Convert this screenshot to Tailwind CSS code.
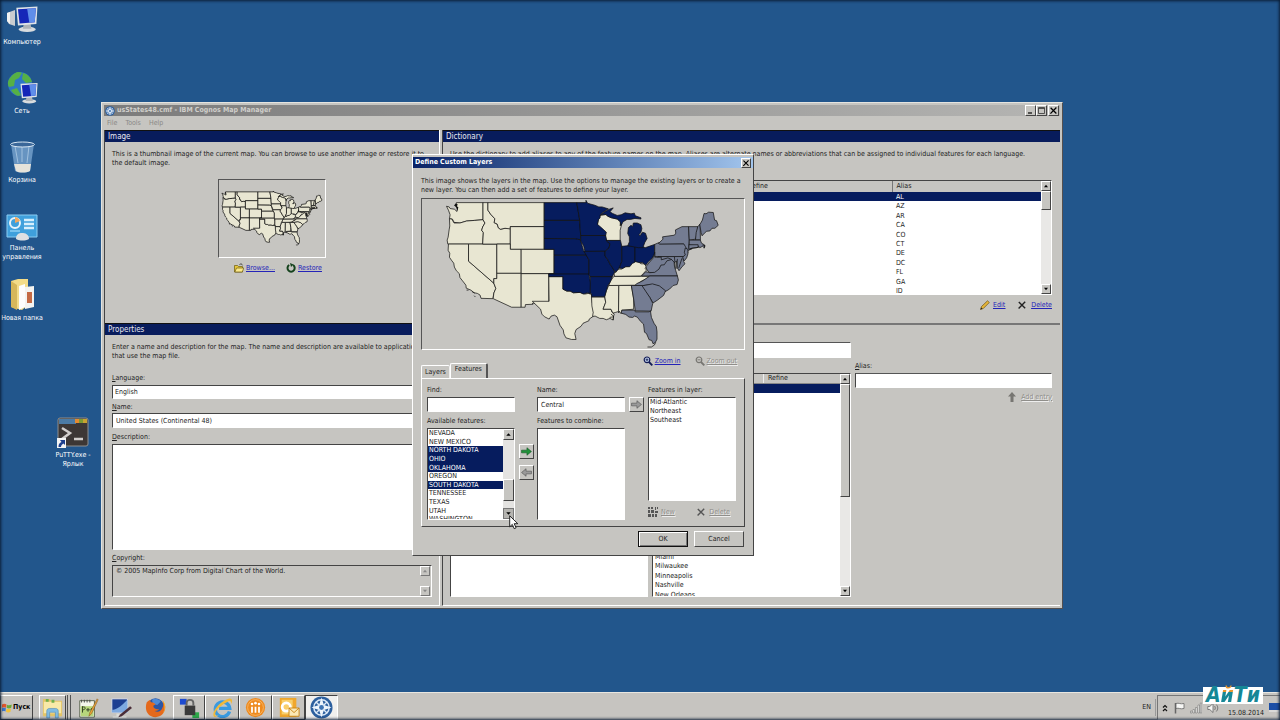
<!DOCTYPE html>
<html lang="ru">
<head>
    <meta charset="UTF-8">
    <meta name="viewport" content="width=device-width, initial-scale=1.0">
    <title>IBM Cognos Map Manager</title>
    <script src="https://cdn.jsdelivr.net/npm/@tailwindcss/browser@4"></script>
</head>
<body class="relative flex min-h-screen flex-col overflow-hidden bg-[#22568c] font-['DejaVu_Sans_Condensed','Noto_Sans',sans-serif] text-[7px] leading-[9px] text-[#222]">

    <!-- shared symbols -->
    <svg class="absolute size-0" aria-hidden="true">
        <symbol id="up" viewBox="0 0 10 10"><path d="M5 3.500 7.500 6.500h-5z"/></symbol>
        <symbol id="down" viewBox="0 0 10 10"><path d="M5 6.500 7.500 3.500h-5z"/></symbol>
        <symbol id="cross" viewBox="0 0 10 10"><path d="M1.800 2 8.200 8.300M8.200 1.700 1.600 8.500" fill="none" stroke="currentColor" stroke-width="1.400"/></symbol>
        <symbol id="arrow" viewBox="0 0 12 10"><path d="M.5 3.500h6V.8L11.500 5 6.500 9.200V6.500h-6z" stroke="currentColor" stroke-width=".6"/></symbol>
        <symbol id="globe" viewBox="0 0 24 24">
            <circle cx="12" cy="12" r="11.500" fill="#2c5f9e"/>
            <circle cx="12" cy="12" r="8" fill="none" stroke="#dce9f7" stroke-width="1.500"/>
            <path d="M12 1.500 14.500 9.500 22.500 12 14.500 14.500 12 22.500 9.500 14.500 1.500 12 9.500 9.500z" fill="#eef5fc"/>
            <path d="M6 6 10 10M18 6 14 10M6 18 10 14M18 18 14 14" stroke="#dce9f7" stroke-width="1.500"/>
            <circle cx="12" cy="12" r="2.500" fill="#3d73b3"/>
        </symbol>
        <symbol id="monitor" viewBox="0 0 24 24">
            <ellipse cx="14" cy="21.500" rx="8" ry="2.500" fill="#d9dcde"/>
            <path d="M11 16h6l1 5h-8z" fill="#aeb4b8"/>
            <path d="M4 1.500 23.500.5 22.500 16.500 5.500 18z" fill="#dfe4e8"/>
            <path d="M5.500 3 22 2 21 15 7 16.200z" fill="#1526b8"/>
            <path d="M14 2.500 22 2 21 15 16 15.500z" fill="#5f8eea"/>
        </symbol>
        <symbol id="usmap" viewBox="33 146 972 456">
            <g stroke="#111" stroke-linejoin="round">
                <g class="fill-[#e8e6d2]">
                    <path d="M104 168l8 2 3 5 13 2 8 7 2-12-5-3 1-12h81v52l-25 2-25 2-20 6-18-2-5-10-9-1 2-12-5-14z"/>
                    <path d="M113 206l7 1 7 12 18 0 20-6 25-2 25-2 6 10-7 12-3 10 5 7-2 35H108l-2-12 3-9 3-22 2-12z"/>
                    <path d="M110 283h61v52l77 67 6 16-6 14-3 17-36-1-3-10-8-5-10-2-10-8-14-6-1-9-10-13-8-10-2-12-9-9-6-11-2-12-7-9-6-9 1-12-5-9z"/>
                    <path d="M171 283h86v105h-9v14l-77-67z"/>
                    <path d="M215 157h15v23l8 12 13 14-2 12 9 4 4 12 6 4 14-3 16 1v47h-84l2-35-5-7 3-10 7-12-6-10z"/>
                    <path d="M230 157h171v73H298v7l-16-2-14 3-6-4-4-12-9-4 2-12-13-14-8-12z"/>
                    <path d="M298 230h103v69H298z"/>
                    <path d="M257 283h41v16h33v73h-74z"/>
                    <path d="M331 299h100v74H331z"/>
                    <path d="M257 372h74v103h-29l-56-26 2-17 6-14-6-16v-14h9z"/>
                    <path d="M331 373h84v89l-50 1 2 3-23 1-1 8h-12z"/>
                    <path d="M415 382h43v38l12 6 10 0 10 5 20-1 15 5 10-2 10 3 2 24 5 20-1 22-13 9-1 5-18 8-6 9-15 10-4 12 4 18-14 0-17-5-6-12-2-12-10-14-9-26-8-5-10 3-6 9-14-7-8-8-4-15-25-24h51z"/>
                    <path d="M545 444h40l3 16-8 21h24l3 9 7 6-2 6-1 12-10-5-11 4-10-4-10 0-14-7-8 1 2-12-4-20z"/>
                    <path d="M597 409h31l-1 79-10 3-7 2-6-12h-24l8-21-3-18 5-17z"/>
                    <path d="M628 409h38l7 41v31l-36 3 2 8-7 1-2-6-3 5z"/>
                    <path d="M613 381h109l-6 6-18 8-18 13-83 1 6-14z"/>
                    <path d="M615 381l-2-10 7-3 3-9 14 0 10-7 13-2 5-9 10-5 10-1 10 8 10 0 7 9-4 5 4 5-9 10-8 8z"/>
                    <path d="M563 222l3-15 6-12 18-2 4 5 12 5 18 4 9 8-1 12 5-6-5 20 0 31h-42l-4-17-9-12-14-10z"/>
                </g>
                <g class="fill-(--central)">
                    <path d="M401 157h99l5 28 4 26H401z"/>
                    <path d="M401 211h108l3 46-1 13-16-3-94-1z"/>
                    <path d="M401 266l94 1 16 3 10 33 9 14h-99v-18h-30z"/>
                    <path d="M431 317h99l7 14v44H415v-2h16z"/>
                    <path d="M415 374h122l5 27-1 33-8-3-13 4-10-5-20 1-10-5-10 0-12-6v-38h-43z"/>
                    <path d="M500 157h28v-7l5 9 22 6 12 5 10 0 19 6-17 11-8 8 0 8-5 6-3 14 14 12 13 12-2 10h-76l-2-22-1-24z"/>
                    <path d="M512 257h76l3 17 10 8-3 13-12 10-61 1-4-17-9-16z"/>
                    <path d="M522 305h64l0 14 8 11 8 15 8 10 5 13-7 14h-67l-4-7v-44z"/>
                    <path d="M541 382h67l-5 14-8 13-5 16-5 18h-40v-9l-4-2z"/>
                    <path d="M590 272h43l4 18v46l-5 14-7 12-8 6-15-23-8-15-8-11 0-14 12-10 3-13-10-8z"/>
                    <path d="M637 290l18-2h22v50l-8 4-8 10-12 0-10 5-10-1 8-20z"/>
                    <path d="M677 288l22 2 9 4 12-4 17-6v30l-9 14-10 9-8 10-10-8-12 0-11-3z"/>
                    <path d="M572 195l13-10 14-8 12-4-10 12 8 5 14 6 12-2 12-6 18 3 10-2 3 8 17 6 0 4-18-2-14 3-10 0-12 7-7 12-2-12-9-8-18-4-12-5-4-5z"/>
                    <path d="M655 288l5-12 0-15-5-10 2-18 8-7 5 4 2-11 12 0 11 5 3 12-3 12-6 7 3 3 8-11 9 3 5 16-7 12-6 16-14 0z"/>
                </g>
                <g class="fill-(--east)">
                    <path d="M737 284l14-6v4h79l8 8-2 10 2 8-8 13h-93z"/>
                    <path d="M749 281l13-13-1-7 36-5 4-6-1-10 20-10h20l2 40-1 18 0 9 10 0-14 6-7-13-5-8-74 1z"/>
                    <path d="M840 230h29l-7 38-20 3z"/>
                    <path d="M875 222l1 48h-15l2-22 5-18z"/>
                    <path d="M874 224l8-14 5-20 6 1 8-5 14 1 4 23 6 2 5 14-10 9-9 0-6 8-10 1-7 6-7 8-3-10z"/>
                    <path d="M842 271h34l3 9 10 6-1 8-6-4-8 4-6-6-26-2z"/>
                    <path d="M841 285h28v8l-18 2-10 4z"/>
                    <path d="M830 295l8 4 0 14-4 12-7 9-7-10 10-8-3-8z"/>
                    <path d="M747 321h75l3 15 4 7-9 9-9 12-6-10-2-20-8 8-8-9-18 4-18-5h-8z"/>
                    <path d="M737 308v15h20v8l20-6 12 5-12 9-10 10-10-1-8 17-12 7-15-2-8-8-4-10 9-11 12-14z"/>
                    <path d="M697 380l13-13 12 3 15-1 13-10 6-12 10-1 8-12 14-4 8 8 1 12 4 14 5 16z"/>
                    <path d="M700 395l22-15h84l3 12-4 14-12 3-11 11-12 7-19-15-21-6-20 2-12 2-23 0 8-7z"/>
                    <path d="M697 410l13-2 20-4 21 6 19 15-6 14-18 14-14 9-12-20-10-12z"/>
                    <path d="M666 409h32l12 18 12 18 9 18-5 24-48-1-5-36z"/>
                    <path d="M637 484h39l2 5 42 0 4-3 3 20 8 18 7 10 2 16 0 22-5 10-7 4-4-10-8-2-8-19-6-4-3-25-9-8-10-13-8-3-6 4-11-1-10-8-14-4z"/>
                </g>
            </g>
            <path d="M132 160l6 2-2 6 4 4-3 10-4-12-6-4z" fill="#111"/>
            <path d="M165 423h6M182 428l8 4M188 440l4 4M715 596l12 0 9-6 4-8M604 496l8 6-2 12M600 506l12-2M845 297l20-3 8-2M882 286l8 2-3 8" fill="none" stroke="#111"/>
            <path d="M797 322l3 36M806 328l-2 30M820 326l-10 30" fill="none" stroke="#111"/>
        </symbol>
    </svg>

    <!-- desktop -->
    <main class="relative flex-1 text-white">
        <a href="#" class="absolute top-1 left-0 flex w-11 flex-col items-center gap-[1px] text-center">
            <svg class="h-[33px] w-[34px]" viewBox="0 0 34 33">
                <path d="M2 9 10 6v16l-6-2-2-3z" fill="#c9cdd0"/><path d="M2 9 5 8v12l-3-3z" fill="#f2f2f2"/>
                <use href="#monitor" x="7" y="1" width="26" height="28"/>
            </svg>
            Компьютер
        </a>
        <a href="#" class="absolute top-[70px] left-0 flex w-11 flex-col items-center gap-[2px] text-center">
            <svg class="h-[35px] w-[34px]" viewBox="0 0 34 35">
                <circle cx="15" cy="14" r="12" fill="#2f77c4"/>
                <path d="M5 8c4-6 9-7 12-5l-3 5-4 2-1 6-5 1c-2-3-1-7 1-9zM18 3c5 1 8 5 9 9l-6 1-4-4zM6 20l6-2 4 7-3 1c-3-1-6-4-7-6z" fill="#56b045"/>
                <use href="#monitor" x="12" y="11" width="21" height="24"/>
            </svg>
            Сеть
        </a>
        <a href="#" class="absolute top-[140px] left-0 flex w-11 flex-col items-center gap-[2px] text-center">
            <svg class="h-[34px] w-[30px]" viewBox="0 0 30 34">
                <path d="M4 4h23l-4 27c-4 2-11 2-15 0z" fill="#7fa9d3" opacity=".75"/>
                <path d="M7 24h17l-1 7c-4 2-11 2-14 0z" fill="#e6e3da"/>
                <path d="M8 6 11 23M22 6 20 23M15 6v16" stroke="#b9d3ea" stroke-width="1" opacity=".7"/>
                <ellipse cx="15.500" cy="4.500" rx="12" ry="2.500" fill="#3a6799" stroke="#d8e6f2"/>
            </svg>
            Корзина
        </a>
        <a href="#" class="absolute top-[212px] left-0 flex w-11 flex-col items-center gap-[3px] text-center">
            <svg class="h-[29px] w-[34px]" viewBox="0 0 34 29">
                <path d="M2 3h30v22H2z" fill="#3fa0dc" stroke="#8ccdf2"/>
                <circle cx="10" cy="11" r="5" fill="none" stroke="#e8f4fb" stroke-width="2"/>
                <path d="M10 11V5a6 6 0 0 1 5 4z" fill="#f0a860"/>
                <path d="M19 8h10M19 12h10M19 16h10" stroke="#d7effc" stroke-width="2.500"/>
                <path d="M5 19h10" stroke="#8fd0f5" stroke-width="1.500"/>
                <path d="M11 27c0-5 3-6 6-6s7 1 7 6c-4 2-9 2-13 0z" fill="#dde0e2"/>
            </svg>
            <span>Панель<br>управления</span>
        </a>
        <a href="#" class="absolute top-[278px] left-0 flex w-11 flex-col items-center gap-[3px] text-center">
            <svg class="h-[33px] w-[30px]" viewBox="0 0 30 33">
                <path d="M4 3 11 1h10v26l-6 5-11-3z" fill="#f3dc88"/>
                <path d="M4 3 10 7v25l-6-3z" fill="#d6b75a"/>
                <path d="M12 8l6-2v23l-6 3z" fill="#fdfdfd"/>
                <path d="M18 9l9-1v21l-9 2z" fill="#f3f3f1"/>
                <path d="M20 14h5v11h-5z" fill="#c46a45"/>
            </svg>
            <span class="whitespace-nowrap">Новая папка</span>
        </a>
        <a href="#" class="absolute top-[416px] left-[51px] flex w-11 flex-col items-center gap-[2px] text-center">
            <svg class="h-[33px] w-[34px]" viewBox="0 0 34 33">
                <rect x="2" y="2" width="30" height="28" rx="2" fill="#3d3735" stroke="#8f8f8f"/>
                <path d="M3 3h17v5H3z" fill="#4c7ba5"/><path d="M19 3h4v4h-4z" fill="#e58b31"/><path d="M23 3h4v4h-4z" fill="#7d9b32"/><path d="M27 3h4v4h-4z" fill="#c9a331"/>
                <path d="M6 12l8 5-8 6M18 23h9" fill="none" stroke="#d2cecc" stroke-width="2.500"/>
                <path d="M1 22h9v10H1z" fill="#f4f4f4"/>
                <path d="M2.500 31c0-3 1-4 3-5L4 24h5v5l-1.500-1.500C6 28.500 5 29.500 5 31z" fill="#1d3f8e"/>
            </svg>
            <span>PuTTY.exe -<br>Ярлык</span>
        </a>

        <!-- Map Manager window -->
        <section class="absolute top-[102px] left-[101px] flex h-[507px] w-[962px] flex-col border border-t-[#e4e4e0] border-r-[#55504f] border-b-[#55504f] border-l-[#e4e4e0] bg-[#c6c5c1] p-[2px] text-[#222]">
            <header class="flex h-3 items-center gap-[2px] bg-linear-to-r from-[#7b7b7b] to-[#b5b5b3] px-px">
                <svg class="size-[10px]"><use href="#globe"/></svg>
                <h1 class="flex-1 font-bold text-[#d0cfcb]">usStates48.cmf - IBM Cognos Map Manager</h1>
                <div class="flex">
                    <button aria-label="Minimize" class="size-[11px] border border-t-white border-r-[#444] border-b-[#444] border-l-white bg-[#c6c5c1]"><svg class="size-[9px]" viewBox="0 0 9 9"><path d="M2 7h4" stroke="#111" stroke-width="1.300"/></svg></button>
                    <button aria-label="Maximize" class="size-[11px] border border-t-white border-r-[#444] border-b-[#444] border-l-white bg-[#c6c5c1]"><svg class="size-[9px]" viewBox="0 0 9 9"><path d="M1.500 1.500h6v6h-6zM1.500 2.500h6" fill="none" stroke="#333" stroke-width=".8"/></svg></button>
                    <button aria-label="Close" class="ml-px size-[11px] border border-t-white border-r-[#444] border-b-[#444] border-l-white bg-[#c6c5c1] text-black"><svg class="size-[9px]"><use href="#cross"/></svg></button>
                </div>
            </header>
            <nav class="flex h-4 items-center gap-2 px-[3px] text-[#8a8986]">
                <a href="#">File</a><a href="#">Tools</a><a href="#">Help</a>
            </nav>

            <div class="grid flex-1 grid-cols-[336px_1fr] grid-rows-[193px_1fr] gap-x-[2px]">
                <!-- Image -->
                <section class="border-r border-l border-r-white border-l-[#444]">
                    <h2 class="h-3 border-t border-[#111] bg-[#081c5c] px-[3px] text-[8px] leading-[11px] text-[#e8e8f0]">Image</h2>
                    <p class="mx-[7px] mt-2 whitespace-nowrap">This is a thumbnail image of the current map. You can browse to use another image or restore it to<br>the default image.</p>
                    <div class="mx-auto mt-[11px] h-[79px] w-[108px] border border-t-[#555] border-r-white border-b-white border-l-[#555]">
                        <svg class="h-full w-full [--central:#e8e6d2] [--east:#e8e6d2] stroke-[6px]" viewBox="80 61 875 632" role="img" aria-label="Map thumbnail">
                            <use href="#usmap" x="33" y="146" width="972" height="456"/>
                        </svg>
                    </div>
                    <div class="mt-1 ml-[129px] flex h-3 items-center text-[#2424b8] underline">
                        <svg class="mr-[2px] size-[10px]" viewBox="0 0 10 10"><path d="M.5 2.500h3l1 1h4V9h-8z" fill="#e9c93c" stroke="#6b5a10" stroke-width=".7"/><path d="M2.500 5h7.300L8.300 9H.8z" fill="#fbe98a" stroke="#6b5a10" stroke-width=".7"/><path d="M5.500 1.500c1.500-1 2.500-.5 3 .8" fill="none" stroke="#222" stroke-width=".8"/></svg>
                        <a href="#" class="w-10">Browse...</a>
                        <svg class="mr-[2px] size-[10px]" viewBox="0 0 10 10"><path d="M3.200 2A3.600 3.600 0 1 0 7 2" fill="none" stroke="#14421c" stroke-width="2"/><path d="M4 0 7.500 1.500 5 4z" fill="#14421c"/></svg>
                        <a href="#">Restore</a>
                    </div>
                </section>

                <!-- Dictionary -->
                <section class="border-l border-[#444]">
                    <h2 class="h-3 border-t border-[#111] bg-[#081c5c] px-[3px] text-[8px] leading-[11px] text-[#e8e8f0]">Dictionary</h2>
                    <p class="mx-[7px] mt-2 whitespace-nowrap">Use the dictionary to add aliases to any of the feature names on the map. Aliases are alternate names or abbreviations that can be assigned to individual features for each language.</p>
                    <div class="mt-[21px] mr-2 ml-[7px] flex h-[115px] border border-t-[#444] border-r-white border-b-white border-l-[#444] bg-white">
                        <div class="flex-1 overflow-hidden">
                            <table class="h-[115px] w-full table-fixed border-collapse">
                                <colgroup><col class="w-[295px]"><col class="w-[146px]"><col></colgroup>
                                <thead class="bg-[#c6c5c1] text-left">
                                    <tr class="h-[11px]"><th class="p-0"></th><th class="p-0 pl-[2px] font-normal">Refine</th><th class="border-l border-[#777] p-0 pl-1 font-normal">Alias</th></tr>
                                </thead>
                                <tbody id="aliases" class="leading-[8px]"></tbody>
                            </table>
                        </div>
                        <div class="flex w-[10px] flex-col bg-[#e9e8e6]">
                            <button aria-label="Scroll up" class="size-[10px] border border-t-white border-r-[#444] border-b-[#444] border-l-white bg-[#c6c5c1]"><svg class="size-2"><use href="#up"/></svg></button>
                            <div class="h-[19px] border border-t-white border-r-[#444] border-b-[#444] border-l-white bg-[#c6c5c1]"></div>
                            <button aria-label="Scroll down" class="mt-auto size-[10px] border border-t-white border-r-[#444] border-b-[#444] border-l-white bg-[#c6c5c1]"><svg class="size-2"><use href="#down"/></svg></button>
                        </div>
                    </div>
                    <div class="mt-[5px] mr-2 flex items-center justify-end text-[#2424b8] underline">
                        <svg class="mr-[3px] size-[10px]" viewBox="0 0 10 10"><path d="M.5 9.500 1.500 6.500 7.500.8 9.300 2.500 3.300 8.500z" fill="#e5b53a" stroke="#6b5316" stroke-width=".7"/><path d="M.5 9.500 1.200 7.500 2.500 8.800z" fill="#222"/></svg>
                        <a href="#" class="mr-3">Edit</a>
                        <svg class="mr-1 size-[10px] text-[#222]"><use href="#cross"/></svg>
                        <a href="#">Delete</a>
                    </div>
                </section>

                <!-- Properties -->
                <section class="flex flex-col border-r border-b border-l border-r-white border-b-white border-l-[#444] px-[7px] pb-2">
                    <h2 class="-mx-[7px] h-3 border-t border-[#111] bg-[#081c5c] px-[3px] text-[8px] leading-[11px] text-[#e8e8f0]">Properties</h2>
                    <p class="mt-2 whitespace-nowrap">Enter a name and description for the map. The name and description are available to applications<br>that use the map file.</p>
                    <label for="lang" class="mt-[13px]"><u>L</u>anguage:</label>
                    <input id="lang" value="English" class="mt-[2px] h-[14px] w-[320px] border border-t-[#444] border-r-white border-b-white border-l-[#444] bg-white px-[2px]">
                    <label for="mapname" class="mt-1"><u>N</u>ame:</label>
                    <input id="mapname" value="United States (Continental 48)" class="mt-px h-[15px] w-[320px] border border-t-[#444] border-r-white border-b-white border-l-[#444] bg-white px-[3px]">
                    <label for="desc" class="mt-[5px]"><u>D</u>escription:</label>
                    <textarea id="desc" class="mt-[2px] w-[320px] flex-1 resize-none border border-t-[#444] border-r-white border-b-white border-l-[#444] bg-white"></textarea>
                    <label for="copy" class="mt-1"><u>C</u>opyright:</label>
                    <div class="mt-[2px] flex h-8 w-[320px] border border-t-[#444] border-r-white border-b-white border-l-[#444]">
                        <textarea id="copy" readonly class="flex-1 resize-none overflow-hidden px-[3px] pt-px">© 2005 MapInfo Corp from Digital Chart of the World.</textarea>
                        <div class="flex w-[11px] flex-col justify-between fill-[#888]">
                            <button aria-label="Scroll up" class="size-[10px] border border-t-white border-r-[#777] border-b-[#777] border-l-white"><svg class="size-2"><use href="#up"/></svg></button>
                            <button aria-label="Scroll down" class="size-[10px] border border-t-white border-r-[#777] border-b-[#777] border-l-white"><svg class="size-2"><use href="#down"/></svg></button>
                        </div>
                    </div>
                </section>

                <!-- Dictionary entry editor -->
                <section class="flex gap-1 border-t-2 border-b border-l border-t-[#777] border-b-white border-l-[#444] pt-[17px] pr-2 pb-2 pl-[7px]">
                    <div class="flex w-[198px] flex-col">
                        <input aria-label="Find" class="mb-[15px] h-4 border border-t-[#555] border-r-white border-b-white border-l-[#444] bg-white">
                        <div class="flex-1 border border-t-[#444] border-r-white border-b-white border-l-[#444] bg-white"></div>
                    </div>
                    <div class="flex w-[199px] flex-col">
                        <input aria-label="Feature name" class="mb-[15px] h-4 border border-t-[#555] border-r-white border-b-white border-l-[#444] bg-white">
                        <div class="flex h-[224px] border border-t-[#444] border-r-white border-b-white border-l-[#444] bg-white">
                            <div class="flex-1 overflow-hidden">
                                <div class="grid h-[10px] grid-cols-[110px_1fr] border-b border-[#888] bg-[#c6c5c1]"><span></span><span class="border-l border-[#eee] pl-1">Refine</span></div>
                                <ul id="cities" class="grid h-[216px] auto-rows-fr"></ul>
                            </div>
                            <div class="flex w-[10px] flex-col bg-[#e9e8e6]">
                                <button aria-label="Scroll up" class="size-[10px] border border-t-white border-r-[#444] border-b-[#444] border-l-white bg-[#c6c5c1]"><svg class="size-2"><use href="#up"/></svg></button>
                                <div class="h-[113px] border border-t-white border-r-[#444] border-b-[#444] border-l-white bg-[#c6c5c1]"></div>
                                <button aria-label="Scroll down" class="mt-auto size-[10px] border border-t-white border-r-[#444] border-b-[#444] border-l-white bg-[#c6c5c1]"><svg class="size-2"><use href="#down"/></svg></button>
                            </div>
                        </div>
                    </div>
                    <div class="flex flex-1 flex-col pt-5">
                        <label for="alias"><u>A</u>lias:</label>
                        <input id="alias" class="mt-[2px] h-[15px] border border-t-[#555] border-r-white border-b-white border-l-[#444] bg-white">
                        <div class="mt-1 flex items-center justify-end gap-1 text-[#8f8e8a]">
                            <svg class="size-[10px]" viewBox="0 0 10 10"><path d="M5 0 9 4.500H6.500V10h-3V4.500H1z" fill="#777672"/></svg>
                            <button disabled class="underline [text-shadow:1px_1px_#eee]">Add entry</button>
                        </div>
                    </div>
                </section>
            </div>
        </section>

        <!-- Define Custom Layers dialog -->
        <section role="dialog" aria-labelledby="dlg" class="absolute top-[154px] left-[412px] flex w-[342px] flex-col border border-t-white border-r-[#444] border-b-[#444] border-l-white bg-[#c6c5c1] pt-[2px] pb-2 text-[#222]">
            <header class="flex h-[11px] items-center justify-between bg-linear-to-r from-[#0a2266] to-[#a3c6ee] pr-[2px] pl-[2px]">
                <h2 id="dlg" class="font-bold text-white">Define Custom Layers</h2>
                <button aria-label="Close" class="size-[10px] border border-t-white border-r-[#444] border-b-[#444] border-l-white bg-[#c6c5c1] text-black"><svg class="size-2"><use href="#cross"/></svg></button>
            </header>
            <div class="flex flex-col px-2 pt-[9px]">
                <p class="whitespace-nowrap">This image shows the layers in the map. Use the options to manage the existing layers or to create a<br>new layer. You can then add a set of features to define your layer.</p>
                <svg class="mt-[3px] h-[152px] w-full border border-t-[#555] border-r-white border-b-white border-l-[#555] stroke-[2.2px] [--central:#061c5e] [--east:#747c92]" viewBox="33 146 972 456" role="img" aria-label="Layers map">
                    <use href="#usmap" x="33" y="146" width="972" height="456"/>
                </svg>

                <div class="flex h-7 justify-between">
                    <div role="tablist" class="flex items-end">
                        <button role="tab" class="h-[13px] rounded-t-xs border border-b-0 border-t-white border-r-[#eee] border-l-white px-[3px]">Layers</button>
                        <button role="tab" aria-selected="true" class="h-[15px] rounded-t-xs border border-r-2 border-b-0 border-t-white border-r-[#555] border-l-white px-1 pb-[3px]">Features</button>
                    </div>
                    <div class="flex h-[22px] items-center pr-2">
                        <svg class="mr-[2px] size-[10px]" viewBox="0 0 10 10"><circle cx="4" cy="3.800" r="2.800" fill="#cfe0f5" stroke="#111a55" stroke-width="1.200"/><path d="M2.500 3.800h3M4 2.300v3" stroke="#111a55" stroke-width=".9"/><path d="M6 6 9.300 9.300" stroke="#111a55" stroke-width="1.800"/></svg>
                        <a href="#" class="mr-[14px] text-[#2424b8] underline">Zoom in</a>
                        <svg class="mr-[2px] size-[10px]" viewBox="0 0 10 10"><circle cx="4" cy="3.800" r="2.800" fill="none" stroke="#777672" stroke-width="1.200"/><path d="M2.500 3.800h3" stroke="#777672" stroke-width=".9"/><path d="M6 6 9.300 9.300" stroke="#777672" stroke-width="1.800"/></svg>
                        <button disabled class="text-[#8f8e8a] underline [text-shadow:1px_1px_#eee]">Zoom out</button>
                    </div>
                </div>

                <div role="tabpanel" class="flex h-[149px] border border-t-white border-r-[#444] border-b-[#444] border-l-white px-[5px] pt-[7px]">
                    <div class="flex w-[88px] flex-col">
                        <label for="find">Find:</label>
                        <input id="find" class="mt-[2px] h-[15px] border border-t-[#444] border-r-white border-b-white border-l-[#444] bg-white">
                        <span id="avail" class="mt-[5px]">Available features:</span>
                        <div class="mt-[2px] flex h-[92px] border border-t-[#444] border-r-white border-b-white border-l-[#444] bg-white">
                            <ul role="listbox" aria-multiselectable="true" aria-labelledby="avail" id="features" class="grid h-[95px] flex-1 auto-rows-fr [clip-path:inset(0_0_5px_0)]"></ul>
                            <div class="flex w-[11px] flex-col bg-[#e4e3e1]">
                                <button aria-label="Scroll up" class="size-[11px] border border-t-white border-r-[#444] border-b-[#444] border-l-white bg-[#c6c5c1]"><svg class="size-[9px]"><use href="#up"/></svg></button>
                                <div class="mt-[39px] h-[22px] border border-t-white border-r-[#444] border-b-[#444] border-l-white bg-[#c6c5c1]"></div>
                                <button aria-label="Scroll down" class="mt-auto size-[11px] border border-[#777] bg-[#b5b4b0]"><svg class="size-[9px]"><use href="#down"/></svg></button>
                            </div>
                        </div>
                    </div>
                    <div class="flex w-[22px] flex-col items-center gap-[6px] pt-[58px]">
                        <button aria-label="Add" class="flex size-[15px] items-center justify-center border border-t-white border-r-[#444] border-b-[#444] border-l-white fill-[#1f9138] text-[#0c4a1a]"><svg class="h-[9px] w-[11px]"><use href="#arrow"/></svg></button>
                        <button aria-label="Remove" class="flex size-[15px] items-center justify-center border border-t-white border-r-[#444] border-b-[#444] border-l-white fill-[#999] text-[#444]"><svg class="h-[9px] w-[11px] rotate-180"><use href="#arrow"/></svg></button>
                    </div>
                    <div class="flex w-[88px] flex-col">
                        <label for="lname">Name:</label>
                        <input id="lname" value="Central" class="mt-[2px] h-[15px] border border-t-[#444] border-r-white border-b-white border-l-[#444] bg-white px-[3px]">
                        <span id="comb" class="mt-[5px]">Features to combine:</span>
                        <ul role="listbox" aria-labelledby="comb" class="mt-[2px] h-[92px] border border-t-[#444] border-r-white border-b-white border-l-[#444] bg-white"></ul>
                    </div>
                    <div class="flex w-[23px] justify-center pt-[11px]">
                        <button aria-label="Add to layer" class="flex size-[15px] items-center justify-center border border-t-white border-r-[#444] border-b-[#444] border-l-white fill-[#999] text-[#444]"><svg class="h-[9px] w-[11px]"><use href="#arrow"/></svg></button>
                    </div>
                    <div class="flex w-[88px] flex-col">
                        <span id="inl">Features in layer:</span>
                        <ul role="listbox" aria-labelledby="inl" class="mt-[2px] h-[104px] border border-t-[#444] border-r-white border-b-white border-l-[#444] bg-white pl-px">
                            <li role="option">Mid-Atlantic</li><li role="option">Northeast</li><li role="option">Southeast</li>
                        </ul>
                        <div class="mt-[6px] flex items-center justify-between pr-[6px] text-[#8f8e8a]">
                            <button disabled class="flex items-center gap-[3px] underline [text-shadow:1px_1px_#eee]"><svg class="size-[10px] fill-[#555]" viewBox="0 0 10 10"><path d="M0 0h2v2H0zM3 0h2v2H3zM0 3h2v3H0zM3 3h3v3H3zM0 7h3v3H0zM4 7h2v3H4zM7 4h3v2H7zM7 7h2v3H7zM7 0h1v3H7zM9 0h1v2H9z"/></svg>New</button>
                            <button disabled class="flex items-center gap-[3px] underline [text-shadow:1px_1px_#eee]"><svg class="size-[10px] text-[#555]"><use href="#cross"/></svg>Delete</button>
                        </div>
                    </div>
                </div>

                <div class="mt-1 flex justify-end gap-[6px] pr-px">
                    <button class="h-4 w-[50px] border border-[#111] shadow-[inset_1px_1px_#fff,inset_-1px_-1px_#777]">OK</button>
                    <button class="h-4 w-[50px] border border-t-white border-r-[#444] border-b-[#444] border-l-white">Cancel</button>
                </div>
            </div>
        </section>

        <!-- mouse pointer -->
        <svg class="absolute top-[515px] left-[509px] h-[15px] w-[10px]" viewBox="0 0 10 15"><path d="M.7.8v11l2.600-2.400 1.900 4.300 1.900-.9-1.900-4.100h3.600z" fill="#fff" stroke="#111" stroke-width=".9"/></svg>
    </main>

    <!-- taskbar -->
    <footer class="relative flex h-7 items-stretch border-t border-[#e8e6e0] bg-[#c6c4c0] pt-[2px]">
        <button class="flex w-[33px] items-center gap-px border border-t-white border-r-[#444] border-b-[#444] border-l-[#777] pl-px font-bold text-black">
            <svg class="size-[10px] shrink-0" viewBox="0 0 10 10"><path d="M0 1.500C2 .5 3 .7 4.500 1.500L4 4.700C2.500 4 1.500 4 0 4.700z" fill="#e0562c"/><path d="M5 1.700c1.500.8 3 .6 4.800-.2L9.200 4.800c-1.600.8-3 .8-4.600 0z" fill="#69a83a"/><path d="M0 5.300c1.500-.6 2.500-.6 3.900 0L3.400 8.500C2 8 1 8 0 8.400z" fill="#3c76c6"/><path d="M4.500 5.500c1.500.7 3 .7 4.500 0L8.500 8.800c-1.500.8-3 .8-4.500 0z" fill="#f2c23a"/></svg>
            Пуск
        </button>
        <button aria-label="Проводник" class="ml-[6px] flex w-[27px] items-center justify-center border border-t-white border-r-[#444] border-b-transparent border-l-white">
            <svg class="size-[23px]" viewBox="0 0 24 24"><path d="M2 3h7l2 2h11v16H2z" fill="#e3c467"/><path d="M3 6h18v12H3z" fill="#f8e9a8"/><path d="M5 3h3v3H5zM11 4h3v3h-3z" fill="#6fb04c"/><path d="M6 23v-7c0-2 1-3 3-3h6c2 0 3 1 3 3v7h-3v-6H9v6z" fill="#7fbbe2" stroke="#4784b5" stroke-width=".6"/></svg>
        </button>
        <div class="flex gap-[2px] pl-px"><i class="w-px bg-[#555]"></i><i class="w-px bg-[#555]"></i></div>
        <div class="flex flex-1">
            <button aria-label="Notepad++" class="flex w-[33px] items-center justify-center">
                <svg class="size-[22px]" viewBox="0 0 24 24"><path d="M3 4h16v18H3z" fill="#f4f6ea" stroke="#57614a"/><path d="M4 10h14v11H4z" fill="#b7d67c"/><path d="M5 3v3M8 3v3M11 3v3M14 3v3" stroke="#444"/><path d="M6 10v7M6 11c4-1 4 3 0 3M12 12v4M10 14h4M16 12v4M14.500 14H18" stroke="#2f3d22" fill="none"/><path d="M22 2 14 17l-1 4 3-3 7-15z" fill="#e9a63b" stroke="#6d4512" stroke-width=".5"/></svg>
            </button>
            <button aria-label="Удалённый рабочий стол" class="flex w-[34px] items-center justify-center">
                <svg class="size-[22px]" viewBox="0 0 24 24"><path d="M2 2h17v15H2z" fill="#1d3f92" stroke="#dfe3ea"/><path d="M2 14c5 0 9-3 17-11v14H2z" fill="#7ea9e0"/><path d="M7 18h7v3h4v2H3v-2h4z" fill="#dcdcd8"/><path d="M22 10 11 19l-2 3 4-1 11-9z" fill="#4a2d38"/></svg>
            </button>
            <button aria-label="Firefox" class="flex w-[35px] items-center justify-center">
                <svg class="size-[21px]" viewBox="0 0 24 24"><circle cx="12" cy="11.500" r="10" fill="#2b56a5"/><path d="M8 3c3-2 8-1 10 2l-4 4-5-1z" fill="#4d8ad6"/><path d="M2 6c-3 9 1 17 10 17 7 0 12-6 11-13-1-3-2-5-3-6 1 4 1 6 0 8-1 4-5 6-9 4 3 0 4-1 5-2-3 0-4 0-6-2-1-2 0-3 2-3-1-2-2-3-5-3-1-1-1-2-1-3C4 4 3 5 2 6z" fill="#e4691c"/><path d="M20 4c3 5 3 11 0 15 4-4 4-12 0-15z" fill="#f8c02e"/></svg>
            </button>
            <button aria-label="PuTTY Agent" class="flex w-8 items-center justify-center border border-t-white border-r-[#444] border-b-[#444] border-l-white">
                <svg class="size-[23px]" viewBox="0 0 24 24"><path d="M2 3h7v6H2z" fill="#1e4bd0"/><path d="M15 17h7v6h-7z" fill="#2ea94a"/><path d="M9 10V7c0-4 7-4 7 0v3" fill="none" stroke="#666" stroke-width="2"/><path d="M7 10h11v10H7z" fill="#3b3b3b"/></svg>
            </button>
            <button aria-label="Internet Explorer" class="flex w-[34px] items-center justify-center border border-t-white border-r-[#444] border-b-[#444] border-l-white">
                <svg class="size-[21px]" viewBox="0 0 24 24"><path d="M20 16.500A8.300 8.300 0 1 1 20.300 13H8" fill="none" stroke="#3a9ae0" stroke-width="3.800"/><path d="M2 22C-1 17 10 4 19 2c4-1 5 2 3 6 0-4-2-4-5-2C9 10 2 17 4 21c0 1 3 0 4-1-2 2-5 4-6 2z" fill="#f0b93a"/></svg>
            </button>
            <button aria-label="Cognos" class="flex w-[33px] items-center justify-center border border-t-white border-r-[#444] border-b-[#444] border-l-white">
                <svg class="size-[21px]" viewBox="0 0 24 24"><circle cx="12" cy="12" r="11" fill="#ee8a1d"/><circle cx="12" cy="12" r="9" fill="none" stroke="#f8b768"/><path d="M8 11v7M12 11v7M16 11v7" stroke="#fff" stroke-width="2"/><circle cx="8" cy="8" r="1.500" fill="#fff"/><circle cx="12" cy="7" r="1.500" fill="#fff"/><circle cx="16" cy="8" r="1.500" fill="#fff"/></svg>
            </button>
            <button aria-label="Outlook" class="flex w-[33px] items-center justify-center border border-t-white border-r-[#444] border-b-[#444] border-l-white">
                <svg class="size-[22px]" viewBox="0 0 24 24"><path d="M2 1h18v21H2z" fill="#f0a72c"/><path d="M4 3h12v16H4z" fill="#f9cf6b"/><circle cx="9" cy="11" r="4.500" fill="none" stroke="#fff" stroke-width="3"/><path d="M12 12h11v9H12z" fill="#fbe9b4" stroke="#c88414"/><path d="M12 12l5.500 5L23 12" fill="none" stroke="#c88414"/></svg>
            </button>
            <button aria-label="Map Manager" class="flex w-[33px] items-center justify-center border border-t-[#444] border-r-white border-b-white border-l-[#444] bg-[#f1f0ee]">
                <svg class="size-[23px]"><use href="#globe"/></svg>
            </button>
        </div>
        <div class="flex items-center">
            <span class="border-r border-[#999] py-1 pr-[4px]">EN</span>
            <div class="ml-px flex h-full items-center gap-[5px] border border-r-0 border-t-[#777] border-b-white border-l-[#777] pl-1">
                <svg class="h-2 w-[6px]" viewBox="0 0 6 8"><path d="M1 3.500 3 1.500 5 3.500M1 7 3 5 5 7" fill="none" stroke="#111" stroke-width="1.200"/></svg>
                <svg class="size-3" viewBox="0 0 12 12"><path d="M2.500 1v10.500" stroke="#666" stroke-width="1.500"/><path d="M3 1.500c3-1 4 1 8 0v5c-4 1-5-1-8 0z" fill="#f6f6f4" stroke="#666" stroke-width=".8"/></svg>
                <svg class="size-3" viewBox="0 0 12 12"><path d="M.5 9h1.500v2H.5zM3 7.500h1.500V11H3zM5.500 5.500H7V11H5.500zM8 3h1.500v8H8zM10.300 1h1.400v10h-1.400z" fill="#f6f6f4" stroke="#666" stroke-width=".5"/></svg>
                <svg class="size-3" viewBox="0 0 12 12"><path d="M.8 4.500h2L6 1.500v9L2.800 7.500h-2z" fill="#f6f6f4" stroke="#666" stroke-width=".8"/><path d="M7.500 4c1 1 1 3 0 4M9.300 2.500c2 2 2 5 0 7" fill="none" stroke="#666" stroke-width=".8"/></svg>
                <time class="pt-3 pl-1">15.08.2014</time>
                <svg class="h-[9px] w-[11px] self-center" viewBox="0 0 11 9"><path d="M0 0h11v7H0z" fill="#1d4fa6"/><path d="M0 8h11" stroke="#eee"/></svg>
            </div>
        </div>
        <!-- АйТи badge -->
        <div class="absolute right-[17px] bottom-4 flex h-[17px] w-[60px] items-center justify-center bg-white text-[21px] leading-none font-bold text-[#158796] italic">
            А<span class="bg-linear-to-b from-[#e8952c] from-35% to-[#158796] to-35% bg-clip-text text-transparent">й</span>Ти
        </div>
    </footer>

    <div class="pointer-events-none absolute inset-0 shadow-[inset_0_0_3px_1px_#0a1c33]"></div>

    <script>
        // dictionary rows
        const aliases = ['AL', 'AZ', 'AR', 'CA', 'CO', 'CT', 'DE', 'DC', 'FL', 'GA', 'ID'];
        document.getElementById('aliases').innerHTML = aliases.map((a, i) => `
            <tr class="${i === 0 ? 'bg-[#061c5e] text-white' : ''}">
                <td class="p-0"></td><td class="p-0"></td><td class="p-0 pl-1">${a}</td>
            </tr>`).join('');

        // city list, first row is selected
        const cities = Array(18).fill('').concat(['Miami', 'Milwaukee', 'Minneapolis', 'Nashville', 'New Orleans']);
        document.getElementById('cities').innerHTML = cities.map((c, i) => `
            <li class="pl-[2px] ${i === 0 ? 'bg-[#061c5e]' : ''}">${c}</li>`).join('');

        const features = ['NEVADA', 'NEW MEXICO', '*NORTH DAKOTA', '*OHIO', '*OKLAHOMA', 'OREGON', '*SOUTH DAKOTA',
            'TENNESSEE', 'TEXAS', 'UTAH', 'WASHINGTON'];
        document.getElementById('features').innerHTML = features.map(f => `
            <li role="option" aria-selected="${f[0] === '*'}" class="h-0 min-h-full pl-px ${f[0] === '*' ? 'bg-[#061c5e] text-white' : ''}">${f.replace('*', '')}</li>`).join('');
    </script>
</body>
</html>
